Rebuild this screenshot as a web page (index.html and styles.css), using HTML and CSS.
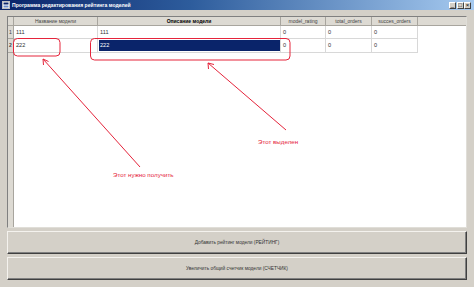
FILE: index.html
```html
<!DOCTYPE html>
<html lang="ru">
<head>
    <meta charset="UTF-8">
    <title>Программа редактирования рейтинга моделей</title>
    <link rel="stylesheet" href="styles.css">
</head>
<body>
    <div class="window">
        <div class="titlebar">
            <svg class="app-icon" width="8" height="8" viewBox="0 0 8 8">
                <rect x="0.5" y="0.5" width="7" height="7" fill="#ffffff" stroke="#c0c0c0"/>
                <rect x="1.5" y="1.5" width="5" height="2" fill="#0a246a"/>
                <rect x="1.5" y="4.5" width="5" height="2" fill="#6c8cc8"/>
            </svg>
            <span class="title">Программа редактирования рейтинга моделей</span>
            <div class="win-buttons">
                <span class="win-btn">_</span>
                <span class="win-btn">□</span>
                <span class="win-btn">×</span>
            </div>
        </div>

        <div class="content">
            <div class="grid">
                <div class="hcell corner"></div>
                <div class="hcell">Название модели</div>
                <div class="hcell bold">Описание модели</div>
                <div class="hcell">model_rating</div>
                <div class="hcell">total_orders</div>
                <div class="hcell">succes_orders</div>
                <div class="hcell filler"></div>

                <div class="vcell">1</div>
                <div class="cell">111</div>
                <div class="cell">111</div>
                <div class="cell">0</div>
                <div class="cell">0</div>
                <div class="cell">0</div>
                <div class="empty"></div>

                <div class="vcell bold">2</div>
                <div class="cell">222</div>
                <div class="cell selected"><span>222</span></div>
                <div class="cell">0</div>
                <div class="cell">0</div>
                <div class="cell">0</div>
                <div class="empty"></div>

                <div class="vfill"></div>
                <div class="empty rest"></div>
            </div>

            <button class="action">Добавить рейтинг модели (РЕЙТИНГ)</button>
            <button class="action">Увеличить общий счетчик модели (СЧЕТЧИК)</button>
        </div>
    </div>

    <svg class="notes" width="474" height="287" viewBox="0 0 474 287">
        <rect x="13.5" y="38.5" width="46.5" height="17.5" rx="4" class="mark"/>
        <rect x="90.5" y="38.5" width="199.5" height="21.5" rx="4" class="mark"/>
        <line x1="43" y1="59" x2="140" y2="167" class="mark"/>
        <polyline points="43.5,65 43,59 48.5,61.5" class="mark"/>
        <line x1="208" y1="63" x2="286" y2="130" class="mark"/>
        <polyline points="208.5,69 208,63 214,64.5" class="mark"/>
        <text x="113" y="177" class="note">Этот нужно получить</text>
        <text x="258" y="144" class="note">Этот выделен</text>
    </svg>
</body>
</html>
```

FILE: styles.css
```css
body {
    margin: 0;
    padding: 0;
    width: 474px;
    height: 287px;
    overflow: hidden;
    font-family: "Liberation Sans", Arial, sans-serif;
    background: #d4d0c8;
    position: relative;
}
.window {
    display: flex;
    flex-direction: column;
    height: 287px;
}
.titlebar {
    height: 10px;
    display: flex;
    align-items: center;
    padding: 0 3px 0 2px;
    background: linear-gradient(90deg, #0a246a 0%, #2d5c9c 40%, #a6caf0 100%);
}
.app-icon {
    margin-right: 2px;
}
.title {
    color: #fff;
    font-weight: bold;
    font-size: 5.1px;
    flex: 1;
}
.win-buttons {
    display: flex;
}
.win-btn {
    width: 7px;
    height: 7px;
    background: #d4d0c8;
    border: 1px solid;
    border-color: #fff #404040 #404040 #fff;
    box-sizing: border-box;
    font-size: 6px;
    line-height: 5px;
    text-align: center;
    color: #000;
    margin-left: 0.5px;
}
.content {
    flex: 1;
    display: flex;
    flex-direction: column;
    padding: 6px 7px 7px 7px;
    gap: 3px;
}
.grid {
    flex: 1;
    display: grid;
    grid-template-columns: 6px 84px 183px 45px 46px 46px 1fr;
    grid-template-rows: 9px 13px 14px 1fr;
    border: 1px solid #808080;
    border-right-color: #e0ded8;
    border-bottom-color: #e0ded8;
    background: #fff;
    font-size: 5.6px;
    color: #333;
}
.hcell {
    background: #dddad3;
    border-right: 1px solid #a8a59e;
    border-bottom: 1px solid #a8a59e;
    text-align: center;
    font-size: 5px;
    line-height: 8px;
    color: #444;
    white-space: nowrap;
    overflow: hidden;
}
.hcell.filler {
    border-right: none;
}
.bold {
    font-weight: bold;
    color: #000;
}
.vcell {
    background: #dddad3;
    border-right: 1px solid #a8a59e;
    border-bottom: 1px solid #a8a59e;
    text-align: center;
    font-size: 5px;
    line-height: 12px;
    color: #444;
}
.cell {
    border-right: 1px solid #d8d8d8;
    border-bottom: 1px solid #d8d8d8;
    padding-left: 2px;
    line-height: 12px;
    white-space: nowrap;
}
.cell.selected {
    padding: 1px 0 1px 1px;
}
.cell.selected span {
    display: block;
    height: 11px;
    line-height: 11px;
    background: #0a246a;
    color: #fff;
    padding-left: 1px;
}
.vfill {
    background: #dddad3;
    border-right: 1px solid #a8a59e;
}
.rest {
    grid-column: 2 / -1;
}
.action {
    height: 23px;
    background: #d4d0c8;
    border: 1px solid;
    border-color: #f4f2ee #404040 #404040 #f4f2ee;
    box-shadow: inset -1px -1px 0 #808080;
    font-family: "Liberation Sans", Arial, sans-serif;
    font-size: 4.8px;
    color: #333;
    padding: 0;
}
.notes {
    position: absolute;
    left: 0;
    top: 0;
    pointer-events: none;
}
.mark {
    fill: none;
    stroke: #e5243b;
    stroke-width: 1;
}
.note {
    fill: #e5243b;
    font-family: "Liberation Sans", Arial, sans-serif;
    font-size: 6.2px;
}
```
